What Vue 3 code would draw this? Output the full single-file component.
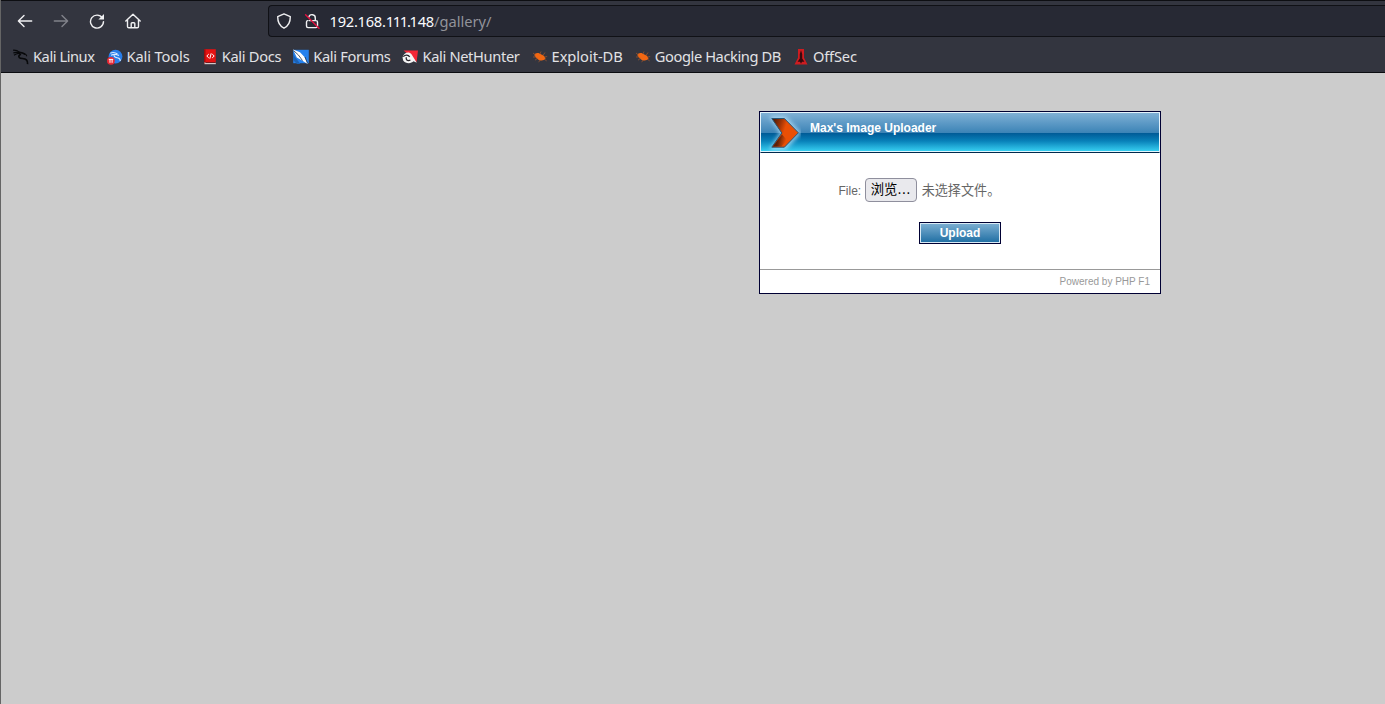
<template>
  <div class="window">
    <!-- Browser toolbar -->
    <header class="browser">
      <div class="toolbar">
        <nav class="nav">
          <svg class="nav-icon" viewBox="0 0 16 16"><path d="M14.7 8H1.5M7 2.4 1.4 8 7 13.6" /></svg>
          <svg class="nav-icon disabled" viewBox="0 0 16 16"><path d="M1.3 8h13.2M9 2.4 14.6 8 9 13.6" /></svg>
          <svg class="nav-icon" viewBox="0 0 16 16">
            <path d="M13.4 5A6.5 6.5 0 1 0 14.5 8.6" />
            <path class="solid" d="M15 1v5.6H9.4z" />
          </svg>
          <svg class="nav-icon home" viewBox="0 0 16 16">
            <path d="M.8 8 8 1.2 15.2 8M2.5 6.8v6.7q0 1.3 1.3 1.3h8.4q1.3 0 1.3-1.3V6.8M6.2 14.6v-4q0-.9.9-.9h1.8q.9 0 .9.9v4" />
          </svg>
        </nav>
        <div class="urlbar">
          <svg class="shield" viewBox="0 0 16 16">
            <path d="M8 .9 14.3 3.6C14.4 9.2 12.6 13 8 15.2 3.4 13 1.6 9.2 1.7 3.6z" />
          </svg>
          <svg class="lock" viewBox="0 0 16 16">
            <path d="M4.8 4.2a3.3 3.3 0 0 1 6.5 1v2.3M5 7.6h7q1.5 0 1.5 1.5v4q0 1.5-1.5 1.5H4q-1.5 0-1.5-1.5V9.1q0-1.2 1-1.5" />
            <path class="slash" d="M1.6 1.8 15 15.2" />
          </svg>
          <span class="url"><span class="host">192.168.<span class="ones">111.</span>148</span><span class="path">/gallery/</span></span>
        </div>
      </div>

      <div class="bookmarks">
        <a v-for="item in bookmarks" :key="item.label" class="bookmark">
          <svg class="favicon" viewBox="0 0 16 16">
            <g v-if="item.icon === 'dragon'" class="dragon">
              <path d="M0 1.2C2.5 1 4.6 1.6 6.6 3.4M.3 4C2.5 3 4.6 3.2 6.6 4.2M1 6.2C3 4.6 4.8 4.2 7 4.6" />
              <path class="thick" d="M5.5 3.4C8 3.4 10.6 3.8 12 5.6M8 5.2C6 5.8 5.2 7.4 6.4 8.6 8 10 11.6 9 13.4 10.8c1.2 1.2 1.4 2.6 1.2 4.4" />
              <path d="M10.8 4.4 13 5.6 13.8 7.2" />
            </g>
            <g v-else-if="item.icon === 'tools'">
              <circle cx="8.5" cy="7.6" r="6.9" fill="#287de9" />
              <path d="M3.3 4.2C6 3 8.5 3.6 10.5 5M4 6.2c3-1.4 5-1.3 8 .2M7 5.5c-.3 2.8 2 3.2 4 3.5 1.5.2 2.2 1.4 2.3 3" fill="none" stroke="#d8eaff" stroke-width="1.1" />
              <circle cx="3.9" cy="11.8" r="3.9" fill="#e92834" />
              <path d="M1.8 10.4h4.4M3 10.4v3.4M5.1 10.4v3.4" fill="none" stroke="#fff" />
            </g>
            <g v-else-if="item.icon === 'docs'">
              <path d="M2.2.2h11.6v13H2.2z" fill="#e41212" />
              <path d="M2.2.2h1.2v15H2.2z" fill="#960a0a" />
              <path d="M2.5 13.3h11.3v1.9H2.5z" fill="#d0c8ca" />
              <path d="M3.4 13h10.4v.9H3.4z" fill="#720a0d" />
              <path d="M6.8 5.1 4.8 7l2 1.9M10.2 5.1l2 1.9-2 1.9M9.2 4.3 7.8 9.7" fill="none" stroke="#fff" />
            </g>
            <g v-else-if="item.icon === 'forums'">
              <path d="M.2.8h15.6v13.4H.2z" fill="#2581ed" />
              <path d="M0 .5 7 3.3 11.5 8l3.2 7-5.2-3.2L3.8 8.5z" fill="#fff" />
              <path d="m.5 1.5 5 4.6 4 5.5M12 8l2.4 6" fill="none" stroke="#263243" stroke-width=".8" />
              <path d="M0 5.2 7.4 15H4L0 11z" fill="#1d62b4" />
            </g>
            <g v-else-if="item.icon === 'hunter'">
              <path d="M1.5 1.6H16L14.6 13 9.5 8z" fill="#f42736" />
              <path d="M.5 8.4C2 3.2 7.2 2.3 9.5 5.2l5.3 8.5-3.3-1.4C9.4 14.8 3.5 15 1.2 11.5z" fill="#f5f5f5" />
              <path d="M1.3 7.6c2-2.1 5-1.9 6.4.2M4.4 8.2c-.8 2.2.6 4.2 4 2.9" fill="none" stroke="#27242b" stroke-width="1.3" />
            </g>
            <g v-else-if="item.icon === 'bug'">
              <path d="M3 4.8c2.2-1.5 4.5-.8 6.3.8 2.2.6 3.6 2 4.2 4-1.2 1.8-3.3 2.2-5.2 1.8-2.1-.4-3.3-1.3-4.2-2.8C2.5 7.5 2 6.1 3 4.8z" fill="#f26712" />
              <path d="M3.5 6 1 4M4 8H1M5.5 9.3 3 11.2M8 11l-1.3 2.2M8 5l1-2.5M11 6.5l2-3M12.5 8.2l2.7-.8M12.6 10.4l2.1 1.5" fill="none" stroke="#97532e" stroke-width=".8" />
            </g>
            <g v-else>
              <path d="M5 0h6v8.7l3.5 6.8h-13L5 8.7z" fill="#cf1c20" />
              <path d="M8 1.2 9.2 5v4.4l2.2 3.4H9l-1 2-1-2H4.6l2.2-3.4V5z" fill="#350a0e" />
            </g>
          </svg>
          <span class="label" :style="{ letterSpacing: item.spacing + 'px' }">{{ item.label }}</span>
        </a>
      </div>
    </header>

    <!-- Page -->
    <main class="page">
      <section class="uploader">
        <div class="title">
          <svg class="arrow" viewBox="0 0 40 40">
            <defs>
              <linearGradient id="arrowFill" gradientUnits="userSpaceOnUse" x1="13" y1="10" x2="25" y2="14">
                <stop offset="0" stop-color="#5a2008" />
                <stop offset=".5" stop-color="#9c3206" />
                <stop offset="1" stop-color="#ea4f05" />
              </linearGradient>
              <linearGradient id="arrowShade" gradientUnits="userSpaceOnUse" x1="16" y1="31" x2="24" y2="33">
                <stop offset="0" stop-color="#5a2008" />
                <stop offset="1" stop-color="#5a2008" stop-opacity="0" />
              </linearGradient>
              <filter id="glow" x="-30%" y="-30%" width="160%" height="160%">
                <feGaussianBlur stdDeviation="2" />
              </filter>
            </defs>
            <path d="M10 5h14l15 16-15 16H10l10-16z" fill="#b9e3fa" stroke="#b9e3fa" stroke-width="2" opacity=".75" filter="url(#glow)" />
            <path d="M10.8 6.5h12.6L37.4 20.8 23.4 35.2H10.8L20.8 21z" fill="url(#arrowFill)" stroke="#295675" />
            <path d="M21 22.5 26 28l-5.5 6.6h-8.6z" fill="url(#arrowShade)" />
          </svg>
          <h1>Max's Image Uploader</h1>
        </div>
        <form class="form" @submit.prevent>
          <div class="file-row">
            <label>File:</label>
            <button type="button" class="browse">浏览…</button>
            <span class="file-name">未选择文件。</span>
          </div>
          <button type="submit" class="upload">Upload</button>
        </form>
        <div class="footer">Powered by PHP F1</div>
      </section>
    </main>
  </div>
</template>

<script setup>
const bookmarks = [
  { label: 'Kali Linux', icon: 'dragon', spacing: -0.45 },
  { label: 'Kali Tools', icon: 'tools', spacing: -0.12 },
  { label: 'Kali Docs', icon: 'docs', spacing: -0.3 },
  { label: 'Kali Forums', icon: 'forums', spacing: -0.34 },
  { label: 'Kali NetHunter', icon: 'hunter', spacing: -0.35 },
  { label: 'Exploit-DB', icon: 'bug', spacing: -0.04 },
  { label: 'Google Hacking DB', icon: 'bug', spacing: -0.41 },
  { label: 'OffSec', icon: 'offsec', spacing: -0.15 },
]
</script>

<style>
body {
  margin: 0;
  overflow: hidden;
}
</style>

<style scoped>
.window {
  box-sizing: border-box;
  height: 100vh;
  border-left: 1px solid #656565;
  background: #ccc;
  overflow: hidden;
}

/* browser */
.browser {
  box-sizing: border-box;
  height: 73px;
  border-top: 1px solid #0d0e12;
  border-bottom: 1px solid #0b0c10;
  background: #33353f;
  color: #e2e2e5;
  font-family: "Noto Sans", sans-serif;
  font-size: 14.67px;
}

.toolbar {
  display: flex;
  align-items: center;
  height: 40px;
}

.nav {
  display: flex;
  gap: 20px;
  width: 267px;
  padding-left: 16px;
  box-sizing: border-box;
}

.nav-icon,
.shield,
.lock {
  width: 16px;
  height: 16px;
  fill: none;
  stroke: #f0f0f2;
  stroke-width: 1.4;
  stroke-linecap: round;
  stroke-linejoin: round;
}

.home {
  margin-left: -0.5px;
}

.disabled {
  stroke: #81828a;
}

.solid {
  fill: #f0f0f2;
  stroke: none;
}

.urlbar {
  box-sizing: border-box;
  flex: 1;
  display: flex;
  align-items: center;
  height: 32px;
  padding-left: 7px;
  border: 1px solid #101116;
  border-right: none;
  border-radius: 4px 0 0 4px;
  background: #272934;
}

.lock {
  margin-left: 12px;
}

.lock .slash {
  stroke: #e4103f;
}

.url {
  margin-left: 9.5px;
  color: #fbfbfe;
  white-space: nowrap;
}

.host {
  letter-spacing: -0.25px;
}

.ones {
  letter-spacing: -1.3px;
}

.path {
  color: #92939a;
}

.bookmarks {
  display: flex;
  align-items: center;
  gap: 12px;
  height: 31px;
  padding-left: 12px;
}

.bookmark {
  display: flex;
  align-items: center;
  gap: 4px;
  white-space: nowrap;
}

.label {
  padding-bottom: 2px;
}

.favicon {
  width: 16px;
  height: 16px;
}

.dragon {
  fill: none;
  stroke: #08090b;
  stroke-width: 1.1;
}

.thick {
  stroke-width: 1.7;
}

/* uploader */
.page {
  padding: 38px 0 0 758px;
  font-family: "Liberation Sans", "Noto Sans CJK SC", sans-serif;
  font-size: 12px;
  color: #666;
}

.uploader {
  box-sizing: border-box;
  width: 402px;
  height: 183px;
  border: 1px solid #000033;
  background: #fff;
}

.title {
  box-sizing: border-box;
  display: flex;
  height: 41px;
  border: 1px solid #e3f2fb;
  border-bottom: 1px solid #00294d;
  background: linear-gradient(#7fb0d5 0, #3b83b6 20px, #005a96 20px, #0881b9 28px, #36cef0 38px, #e3f7fd 38px);
}

.arrow {
  width: 40px;
  height: 40px;
  margin-top: -1px;
}

h1 {
  margin: 8px 0 0 9px;
  color: #fff;
  font-size: 12px;
  line-height: 14px;
}

.form {
  display: flex;
  flex-direction: column;
  align-items: center;
  box-sizing: border-box;
  height: 116px;
  padding-top: 25px;
}

.file-row {
  display: flex;
  align-items: center;
  align-self: flex-start;
  height: 24px;
  padding-left: 78.5px;
}

label {
  padding-top: 2px;
}

.browse {
  box-sizing: border-box;
  width: 52px;
  height: 24px;
  margin: 0 5px 0 3.5px;
  padding: 0;
  border: 1px solid #8f8f9d;
  border-radius: 4px;
  background: #e9e9ed;
  color: #000;
  font-family: "DejaVu Sans", "Noto Sans CJK SC", sans-serif;
  font-size: 13.33px;
  line-height: 20px;
}

.file-name {
  font-family: "Noto Sans CJK SC", sans-serif;
  font-size: 13.1px;
  line-height: 20px;
}

.upload {
  box-sizing: border-box;
  width: 82px;
  height: 22px;
  margin-top: 20px;
  padding: 0;
  border: 1px solid #000033;
  box-shadow: inset 0 0 0 1px #d9eaf5;
  background: linear-gradient(#7eb0d3, #1d6da2);
  color: #fff;
  font: bold 12px "Liberation Sans", sans-serif;
}

.footer {
  box-sizing: border-box;
  height: 24px;
  padding-right: 10px;
  border-top: 1px solid #999;
  color: #999;
  font-size: 10px;
  line-height: 23px;
  text-align: right;
}
</style>
